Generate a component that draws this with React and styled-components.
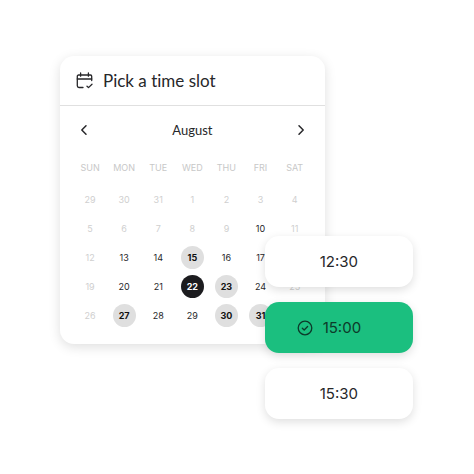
import React, { useState } from 'react';
import styled, { createGlobalStyle, css } from 'styled-components';

const GlobalStyle = createGlobalStyle`
  * {
    box-sizing: border-box;
  }

  body {
    margin: 0;
    background: #fff;
    color: #27272a;
    font-family: Inter, 'Liberation Sans', sans-serif;
  }

  button {
    padding: 0;
    border: 0;
    background: none;
    color: inherit;
    font: inherit;
    cursor: pointer;
  }
`;

const Page = styled.main`
  min-height: 100vh;
  padding: 56px 61px 55px 60px;
`;

// the card and the slots share one grid cell, so the slots lie over the card
const Booking = styled.div`
  display: grid;
  grid-template: auto / 100%;
  grid-template-areas: 'stack';
  align-items: start;
  max-width: 480px;
  margin: 0 auto;
`;

const Card = styled.section`
  grid-area: stack;
  width: 75%;
  border-radius: 14px;
  background: #fff;
  box-shadow: 0 3px 12px rgba(0, 0, 0, 0.13);
`;

const CardHeader = styled.header`
  display: flex;
  align-items: center;
  gap: 10px;
  height: 50px;
  padding: 0 16px;
  border-bottom: 1px solid #e0e0e0;

  svg {
    flex: none;
  }
`;

const Title = styled.h1`
  margin: 0;
  font-family: Lato, 'Liberation Sans', sans-serif;
  font-size: 17px;
  font-weight: 400;
  font-variant-ligatures: none;
  line-height: 24px;
  white-space: nowrap;
`;

const MonthBar = styled.div`
  display: flex;
  align-items: center;
  justify-content: space-between;
  height: 48px;
  padding: 0 16px;
`;

const Month = styled.h2`
  margin: 0;
  font-family: Lato, 'Liberation Sans', sans-serif;
  font-size: 13px;
  font-weight: 400;
`;

const ArrowButton = styled.button`
  display: flex;
  align-items: center;
  justify-content: center;
  width: 16px;
  height: 24px;
`;

const CalendarBody = styled.div`
  padding: 0 13px 14px;
`;

const Days = styled.table`
  width: 100%;
  table-layout: fixed;
  border-collapse: collapse;
  text-align: center;
`;

const Weekday = styled.th`
  height: 31px;
  padding: 0 0 4px;
  color: #c8c8c8;
  font-size: 9px;
  font-weight: 400;
`;

const DayCell = styled.td`
  height: 29px;
  padding: 0;
`;

const Day = styled.button`
  display: block;
  width: 23px;
  height: 23px;
  margin: 0 auto;
  border-radius: 50%;
  font-size: 9px;
  line-height: 23px;

  ${({ $muted }) =>
    $muted &&
    css`
      color: #cfcfcf;
    `}

  ${({ $open }) =>
    $open &&
    css`
      background: #dfdfdf;
      color: #111;
      font-weight: 700;
    `}

  ${({ $selected }) =>
    $selected &&
    css`
      background: #1c1c1f;
      color: #fff;
      font-weight: 700;
    `}
`;

const Slots = styled.div`
  grid-area: stack;
  justify-self: end;
  z-index: 1;
  display: flex;
  flex-direction: column;
  gap: 15px;
  width: 42%;
  padding-top: 180px;
  pointer-events: none;
`;

const Slot = styled.button`
  display: flex;
  align-items: center;
  justify-content: center;
  gap: 10px;
  height: 51px;
  border-radius: 14px;
  background: #fff;
  box-shadow: 0 3px 10px rgba(0, 0, 0, 0.13);
  font-size: 15px;
  pointer-events: auto;

  &[aria-pressed='true'] {
    padding-right: 20px;
    background: #1bbf7f;
    color: #0d3a2a;
  }
`;

const CalendarIcon = () => (
  <svg
    width="17"
    height="17"
    viewBox="0 0 17 17"
    fill="none"
    stroke="currentColor"
    strokeWidth="1.3"
    strokeLinecap="round"
    strokeLinejoin="round"
    aria-hidden="true"
  >
    <path d="M7 15.5H3a1.7 1.7 0 0 1-1.7-1.7V4.2a1.2 1.2 0 0 1 1.2-1.2h12a1.2 1.2 0 0 1 1.2 1.2v4.4" />
    <path d="M1.3 7h14.4M4.6 1v3.2M12.4 1v3.2" />
    <path d="M11 14.2l1.5 1.4 3.5-3.4" />
  </svg>
);

const CheckIcon = () => (
  <svg
    width="16"
    height="16"
    viewBox="0 0 16 16"
    fill="none"
    stroke="currentColor"
    strokeWidth="1.3"
    strokeLinecap="round"
    strokeLinejoin="round"
    aria-hidden="true"
  >
    <circle cx="8" cy="8" r="6.8" />
    <path d="M5.3 8.2l1.9 1.8 3.4-3.5" />
  </svg>
);

const Chevron = ({ d }) => (
  <svg
    width="8"
    height="12"
    viewBox="0 0 8 12"
    fill="none"
    stroke="currentColor"
    strokeWidth="1.5"
    strokeLinecap="round"
    strokeLinejoin="round"
    aria-hidden="true"
  >
    <path d={d} />
  </svg>
);

const weekdays = ['SUN', 'MON', 'TUE', 'WED', 'THU', 'FRI', 'SAT'];

const weeks = [
  [29, 30, 31, 1, 2, 3, 4],
  [5, 6, 7, 8, 9, 10, 11],
  [12, 13, 14, 15, 16, 17, 18],
  [19, 20, 21, 22, 23, 24, 25],
  [26, 27, 28, 29, 30, 31, 1],
];

const openDays = ['2-3', '3-3', '3-4', '4-1', '4-4', '4-5'];
const times = ['12:30', '15:00', '15:30'];

const isMuted = (week, col) =>
  week === 0 || col === 0 || col === 6 || (week === 1 && col < 5);

const App = () => {
  const [day, setDay] = useState('3-3');
  const [time, setTime] = useState('15:00');

  return (
    <Page>
      <GlobalStyle />
      <Booking>
        <Card>
          <CardHeader>
            <CalendarIcon />
            <Title>Pick a time slot</Title>
          </CardHeader>
          <MonthBar>
            <ArrowButton type="button" aria-label="Previous month">
              <Chevron d="M6 1.8L1.8 6 6 10.2" />
            </ArrowButton>
            <Month>August</Month>
            <ArrowButton type="button" aria-label="Next month">
              <Chevron d="M2 1.8L6.2 6 2 10.2" />
            </ArrowButton>
          </MonthBar>
          <CalendarBody>
            <Days>
              <thead>
                <tr>
                  {weekdays.map((name) => (
                    <Weekday key={name} scope="col">
                      {name}
                    </Weekday>
                  ))}
                </tr>
              </thead>
              <tbody>
                {weeks.map((week, row) => (
                  <tr key={row}>
                    {week.map((number, col) => {
                      const id = `${row}-${col}`;
                      return (
                        <DayCell key={id}>
                          <Day
                            type="button"
                            $muted={isMuted(row, col)}
                            $open={openDays.includes(id)}
                            $selected={day === id}
                            aria-pressed={day === id}
                            onClick={() => setDay(id)}
                          >
                            {number}
                          </Day>
                        </DayCell>
                      );
                    })}
                  </tr>
                ))}
              </tbody>
            </Days>
          </CalendarBody>
        </Card>
        <Slots>
          {times.map((value) => (
            <Slot
              key={value}
              type="button"
              aria-pressed={time === value}
              onClick={() => setTime(value)}
            >
              {time === value && <CheckIcon />}
              {value}
            </Slot>
          ))}
        </Slots>
      </Booking>
    </Page>
  );
};

export default App;
